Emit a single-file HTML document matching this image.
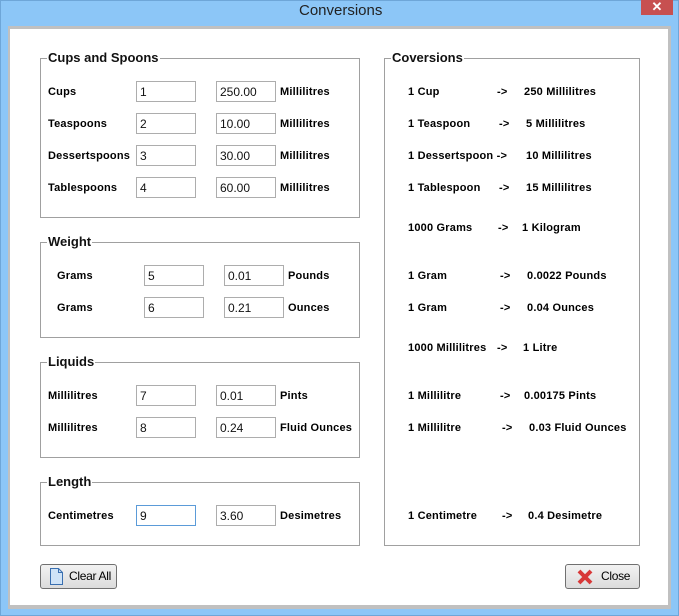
<!DOCTYPE html>
<html><head><style>
*{margin:0;padding:0;box-sizing:border-box}
body{width:679px;height:616px;background:#8cc6f7;position:relative;overflow:hidden;font-family:"Liberation Sans",sans-serif}
.a{position:absolute}
.t{font-size:11px;font-weight:bold;color:#000;white-space:nowrap;line-height:14px;letter-spacing:0.2px;top:0}
.g{position:absolute;border:1px solid #a0a0a0}
.gt{position:absolute;top:-9px;left:6px;background:#fff;font-size:13px;font-weight:bold;color:#111;padding:0 1px;line-height:16px}
.i{position:absolute;width:60px;height:21px;border:1px solid #adadad;background:#fff;font-size:12px;padding:3px 0 0 3px;color:#111;line-height:15px}
.btn{position:absolute;height:25px;border:1px solid #707070;border-radius:3px;background:linear-gradient(#f2f2f2,#dcdcdc);font-size:12px;line-height:23px;letter-spacing:-0.3px}
</style></head><body>
<div class="a" style="left:0;top:0;width:679px;height:616px;border:1px solid #6ea6d8"></div>
<div class="a" style="left:299px;top:2px;font-size:15px;color:#222">Conversions</div>
<div class="a" style="left:641px;top:0;width:32px;height:15px;background:#c75050;color:#fff;font-size:13px;text-align:center;line-height:14px;font-weight:bold">✕</div>
<div class="a" style="left:8px;top:26px;width:663px;height:583px;background:#c0c0c0"></div>
<div class="a" style="left:10px;top:29px;width:658px;height:576px;background:#fff"></div>

<div class="g" style="left:40px;top:58px;width:320px;height:160px"><div class="gt">Cups and Spoons</div></div>
<div class="g" style="left:40px;top:242px;width:320px;height:96px"><div class="gt">Weight</div></div>
<div class="g" style="left:40px;top:362px;width:320px;height:96px"><div class="gt">Liquids</div></div>
<div class="g" style="left:40px;top:482px;width:320px;height:64px"><div class="gt">Length</div></div>
<div class="g" style="left:384px;top:58px;width:256px;height:488px"><div class="gt">Coversions</div></div>

<div class="a t" style="left:48px;top:85px">Cups</div>
<div class="a t" style="left:48px;top:117px">Teaspoons</div>
<div class="a t" style="left:48px;top:149px">Dessertspoons</div>
<div class="a t" style="left:48px;top:181px">Tablespoons</div>
<div class="i" style="left:136px;top:81px">1</div><div class="i" style="left:216px;top:81px">250.00</div>
<div class="i" style="left:136px;top:113px">2</div><div class="i" style="left:216px;top:113px">10.00</div>
<div class="i" style="left:136px;top:145px">3</div><div class="i" style="left:216px;top:145px">30.00</div>
<div class="i" style="left:136px;top:177px">4</div><div class="i" style="left:216px;top:177px">60.00</div>
<div class="a t" style="left:280px;top:85px">Millilitres</div>
<div class="a t" style="left:280px;top:117px">Millilitres</div>
<div class="a t" style="left:280px;top:149px">Millilitres</div>
<div class="a t" style="left:280px;top:181px">Millilitres</div>

<div class="a t" style="left:57px;top:269px">Grams</div>
<div class="a t" style="left:57px;top:301px">Grams</div>
<div class="i" style="left:144px;top:265px">5</div><div class="i" style="left:224px;top:265px">0.01</div>
<div class="i" style="left:144px;top:297px">6</div><div class="i" style="left:224px;top:297px">0.21</div>
<div class="a t" style="left:288px;top:269px">Pounds</div>
<div class="a t" style="left:288px;top:301px">Ounces</div>

<div class="a t" style="left:48px;top:389px">Millilitres</div>
<div class="a t" style="left:48px;top:421px">Millilitres</div>
<div class="i" style="left:136px;top:385px">7</div><div class="i" style="left:216px;top:385px">0.01</div>
<div class="i" style="left:136px;top:417px">8</div><div class="i" style="left:216px;top:417px">0.24</div>
<div class="a t" style="left:280px;top:389px">Pints</div>
<div class="a t" style="left:280px;top:421px">Fluid Ounces</div>

<div class="a t" style="left:48px;top:509px">Centimetres</div>
<div class="i" style="left:136px;top:505px;border-color:#5b9bd8">9</div><div class="i" style="left:216px;top:505px">3.60</div>
<div class="a t" style="left:280px;top:509px">Desimetres</div>

<div class="a t" style="left:408px;top:85px">1 Cup</div><div class="a t" style="left:497px;top:85px">-&gt;</div><div class="a t" style="left:524px;top:85px">250 Millilitres</div>
<div class="a t" style="left:408px;top:117px">1 Teaspoon</div><div class="a t" style="left:499px;top:117px">-&gt;</div><div class="a t" style="left:526px;top:117px">5 Millilitres</div>
<div class="a t" style="left:408px;top:149px">1 Dessertspoon -&gt;</div><div class="a t" style="left:526px;top:149px">10 Millilitres</div>
<div class="a t" style="left:408px;top:181px">1 Tablespoon</div><div class="a t" style="left:499px;top:181px">-&gt;</div><div class="a t" style="left:526px;top:181px">15 Millilitres</div>
<div class="a t" style="left:408px;top:221px">1000 Grams</div><div class="a t" style="left:498px;top:221px">-&gt;</div><div class="a t" style="left:522px;top:221px">1 Kilogram</div>
<div class="a t" style="left:408px;top:269px">1 Gram</div><div class="a t" style="left:500px;top:269px">-&gt;</div><div class="a t" style="left:527px;top:269px">0.0022 Pounds</div>
<div class="a t" style="left:408px;top:301px">1 Gram</div><div class="a t" style="left:500px;top:301px">-&gt;</div><div class="a t" style="left:527px;top:301px">0.04 Ounces</div>
<div class="a t" style="left:408px;top:341px">1000 Millilitres</div><div class="a t" style="left:497px;top:341px">-&gt;</div><div class="a t" style="left:523px;top:341px">1 Litre</div>
<div class="a t" style="left:408px;top:389px">1 Millilitre</div><div class="a t" style="left:500px;top:389px">-&gt;</div><div class="a t" style="left:524px;top:389px">0.00175 Pints</div>
<div class="a t" style="left:408px;top:421px">1 Millilitre</div><div class="a t" style="left:502px;top:421px">-&gt;</div><div class="a t" style="left:529px;top:421px">0.03 Fluid Ounces</div>
<div class="a t" style="left:408px;top:509px">1 Centimetre</div><div class="a t" style="left:502px;top:509px">-&gt;</div><div class="a t" style="left:528px;top:509px">0.4 Desimetre</div>

<div class="btn" style="left:40px;top:564px;width:77px">
<svg class="a" style="left:9px;top:3px" width="13" height="17"><path d="M0.5 0.5H8.5L12.5 4.5V16.5H0.5Z" fill="#cfe3f7" stroke="#3a6fb0"/><path d="M8.5 0.5V4.5H12.5" fill="none" stroke="#3a6fb0"/></svg>
<span class="a" style="left:28px;top:0">Clear All</span></div>
<div class="btn" style="left:565px;top:564px;width:75px">
<svg class="a" style="left:11px;top:4px" width="16" height="16"><path d="M2 2L14 14M14 2L2 14" stroke="#d83838" stroke-width="4"/></svg>
<span class="a" style="left:35px;top:0">Close</span></div>
</body></html>
